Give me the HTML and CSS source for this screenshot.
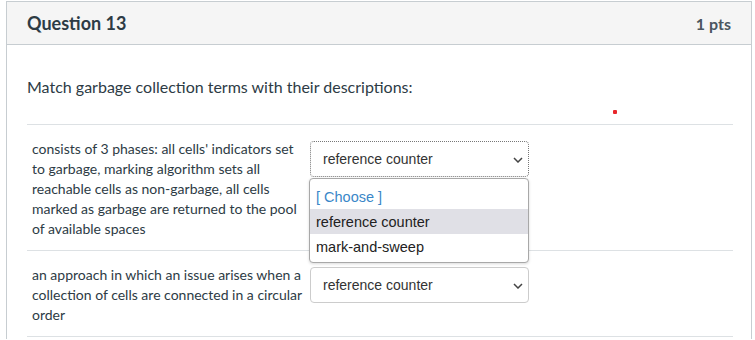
FILE: index.html
```html
<!DOCTYPE html>
<html lang="en">
<head>
    <meta charset="UTF-8">
    <meta name="viewport" content="width=device-width, initial-scale=1.0">
    <title>Question 13</title>
    <link rel="stylesheet" href="styles.css">
</head>
<body>
    <div class="question">
        <div class="header">
            <span class="title">Question 13</span>
            <span class="points">1 pts</span>
        </div>
        <div class="content">
            <div class="text">Match garbage collection terms with their descriptions:</div>
            <span class="dot"></span>
            <div class="answers">
                <div class="answer">
                    <div class="desc">consists of 3 phases: all cells' indicators set to garbage, marking algorithm sets all reachable cells as non-garbage, all cells marked as garbage are returned to the pool of available spaces</div>
                    <div class="select-wrap">
                        <div class="select focused">
                            <span>reference counter</span>
                            <svg class="chev" width="10" height="6" viewBox="0 0 10 6"><path d="M1 1 L5 5 L9 1" fill="none" stroke="#444" stroke-width="1.5"/></svg>
                        </div>
                        <ul class="options">
                            <li class="choose">[ Choose ]</li>
                            <li class="active">reference counter</li>
                            <li>mark-and-sweep</li>
                        </ul>
                    </div>
                </div>
                <div class="answer">
                    <div class="desc">an approach in which an issue arises when a collection of cells are connected in a circular order</div>
                    <div class="select-wrap">
                        <div class="select">
                            <span>reference counter</span>
                            <svg class="chev" width="10" height="6" viewBox="0 0 10 6"><path d="M1 1 L5 5 L9 1" fill="none" stroke="#444" stroke-width="1.5"/></svg>
                        </div>
                    </div>
                </div>
            </div>
        </div>
    </div>
</body>
</html>
```

FILE: styles.css
```css
body {
    margin: 1px 0 0 6px;
    font-family: Lato, "Liberation Sans", sans-serif;
    color: #2d3b45;
    background-color: white;
}
.question {
    width: 744px;
    height: 337px;
    overflow: hidden;
    border: 1px solid #c7cdd1;
    border-bottom: none;
}
.header {
    display: flex;
    justify-content: space-between;
    align-items: center;
    height: 42px;
    padding: 0 20px;
    background-color: #f5f5f5;
    border-bottom: 1px solid #c7cdd1;
}
.header .title {
    font-size: 18px;
    font-weight: 700;
    margin-top: -1px;
}
.header .points {
    font-size: 16px;
    font-weight: 700;
    color: #4a5660;
}
.content {
    position: relative;
    padding: 30px 18px 0 20px;
}
.text {
    font-size: 16px;
    line-height: 24px;
    margin-bottom: 25px;
}
.dot {
    position: absolute;
    left: 606px;
    top: 65px;
    width: 4px;
    height: 4px;
    border-radius: 1px;
    background-color: #e8262b;
}
.answers {
    border-top: 1px solid #dde1e4;
}
.answer {
    display: grid;
    grid-template-columns: 274px 219px;
    column-gap: 4px;
    padding: 14px 0 11px 5px;
    border-bottom: 1px solid #dde1e4;
}
.desc {
    font-size: 14px;
    line-height: 20px;
}
.select-wrap {
    position: relative;
    margin-top: 2px;
}
.select {
    display: flex;
    justify-content: space-between;
    align-items: center;
    height: 34px;
    padding: 0 5px 0 12px;
    border: 1px solid #ccc;
    border-radius: 4px;
    font-family: "Liberation Sans", Arial, sans-serif;
    font-size: 14px;
    color: #333;
    background-color: white;
}
.select.focused {
    border: 1px dotted #777;
}
.chev {
    width: 10px;
    height: 6px;
    margin-top: 1px;
}
.options {
    position: absolute;
    left: -1px;
    top: 37px;
    width: 218px;
    margin: 0;
    padding: 5px 0 3px;
    list-style: none;
    background-color: white;
    border: 1px solid #a8a8a8;
    border-radius: 4px;
    box-shadow: 0 1px 3px rgba(0, 0, 0, 0.15);
    font-family: "Liberation Sans", Arial, sans-serif;
    font-size: 14.5px;
    color: #222;
}
.options li {
    height: 25px;
    line-height: 26px;
    padding-left: 6px;
}
.options .choose {
    color: #3a87c8;
}
.options .active {
    background-color: #e0e0e6;
}
```
